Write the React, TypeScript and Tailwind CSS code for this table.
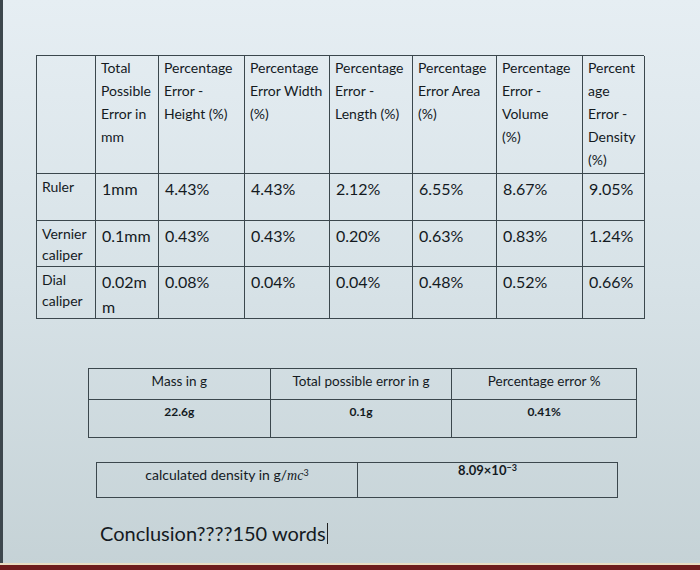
import React from "react";

const cols = [59, 63, 86, 85, 83, 84, 86, 62];

const header: string[][] = [
  [],
  ["Total", "Possible", "Error in", "mm"],
  ["Percentage", "Error -", "Height (%)"],
  ["Percentage", "Error Width", "(%)"],
  ["Percentage", "Error -", "Length (%)"],
  ["Percentage", "Error Area", "(%)"],
  ["Percentage", "Error -", "Volume", "(%)"],
  ["Percent", "age", "Error -", "Density", "(%)"],
];

const rows = [
  { h: 47, cells: [["Ruler"], ["1mm"], ["4.43%"], ["4.43%"], ["2.12%"], ["6.55%"], ["8.67%"], ["9.05%"]] },
  { h: 46, cells: [["Vernier", "caliper"], ["0.1mm"], ["0.43%"], ["0.43%"], ["0.20%"], ["0.63%"], ["0.83%"], ["1.24%"]] },
  { h: 52, cells: [["Dial", "caliper"], ["0.02m", "m"], ["0.08%"], ["0.04%"], ["0.04%"], ["0.48%"], ["0.52%"], ["0.66%"]] },
];

const font = { fontFamily: "Lato, 'Open Sans', sans-serif" };

const App = () => {
  return (
    <div
      className="relative w-[700px] h-[570px] overflow-hidden bg-linear-to-b from-[#e6eef3] via-[#d7e2e7] to-[#c5d2d6] text-[#141a1f]"
      style={font}
    >
      <div className="absolute left-0 top-0 h-full w-[3px] bg-[#3d474d]" />

      <div className="pl-[36px] pt-[55px]">
        <div
          className="grid border-l border-t border-[#3b474d]"
          style={{ gridTemplateColumns: cols.map((c) => c + "px").join(" "), width: 608 }}
        >
          {header.map((lines, i) => (
            <div key={i} className="h-[118px] border-r border-b border-[#3b474d] px-[5px] pt-0 text-[14px] leading-[23px] whitespace-nowrap">
              {lines.map((l, j) => (
                <div key={j}>{l}</div>
              ))}
            </div>
          ))}
          {rows.map((r, ri) =>
            r.cells.map((lines, ci) => (
              <div
                key={ri + "-" + ci}
                className={`border-r border-b border-[#3b474d] pt-[2px] whitespace-nowrap ${ci === 0 ? "px-[5px] text-[14px] leading-[21px]" : "px-[6px] text-[16px] leading-[25px]"}`}
                style={{ height: r.h }}
              >
                {lines.map((l, j) => (
                  <div key={j}>{l}</div>
                ))}
              </div>
            ))
          )}
        </div>
      </div>

      <div className="ml-[88px] mt-[49px] w-[549px] border-l border-t border-[#3b474d] text-[13.5px]">
        <div className="flex h-[31px]">
          <div className="w-[182px] border-r border-b border-[#3b474d] flex items-center justify-center pb-[5px]">Mass in g</div>
          <div className="w-[182px] border-r border-b border-[#3b474d] flex items-center justify-center pb-[5px]">Total possible error in g</div>
          <div className="w-[185px] border-r border-b border-[#3b474d] flex items-center justify-center pb-[5px]">Percentage error %</div>
        </div>
        <div className="flex h-[38px] font-bold text-[12px]">
          <div className="w-[182px] border-r border-b border-[#3b474d] text-center pt-[3px]">22.6g</div>
          <div className="w-[182px] border-r border-b border-[#3b474d] text-center pt-[3px]">0.1g</div>
          <div className="w-[185px] border-r border-b border-[#3b474d] text-center pt-[3px]">0.41%</div>
        </div>
      </div>

      <div className="ml-[96px] mt-[24px] w-[522px] h-[36px] flex border border-[#3b474d] text-[14px]">
        <div className="w-[261px] border-r border-[#3b474d] text-center pt-[1px]">
          calculated density in g/
          <span className="italic" style={{ fontFamily: "'Liberation Serif', serif" }}>
            mc
          </span>
          <sup className="text-[9px]">3</sup>
        </div>
        <div className="flex-1 text-center font-bold text-[13px] -mt-[2px]">
          8.09×10<sup className="text-[9px]">−3</sup>
        </div>
      </div>

      <div className="ml-[100px] mt-[20px] flex items-center text-[20px]">
        <span>Conclusion????150 words</span>
        <span className="ml-[1px] h-[21px] w-px bg-[#222]" />
      </div>

      <div className="absolute left-0 bottom-0 w-full">
        <div className="h-[2px] bg-[#e9dcc0]" />
        <div className="h-[5px] bg-[#6e1c1c]" />
      </div>
    </div>
  );
};

export default App;
